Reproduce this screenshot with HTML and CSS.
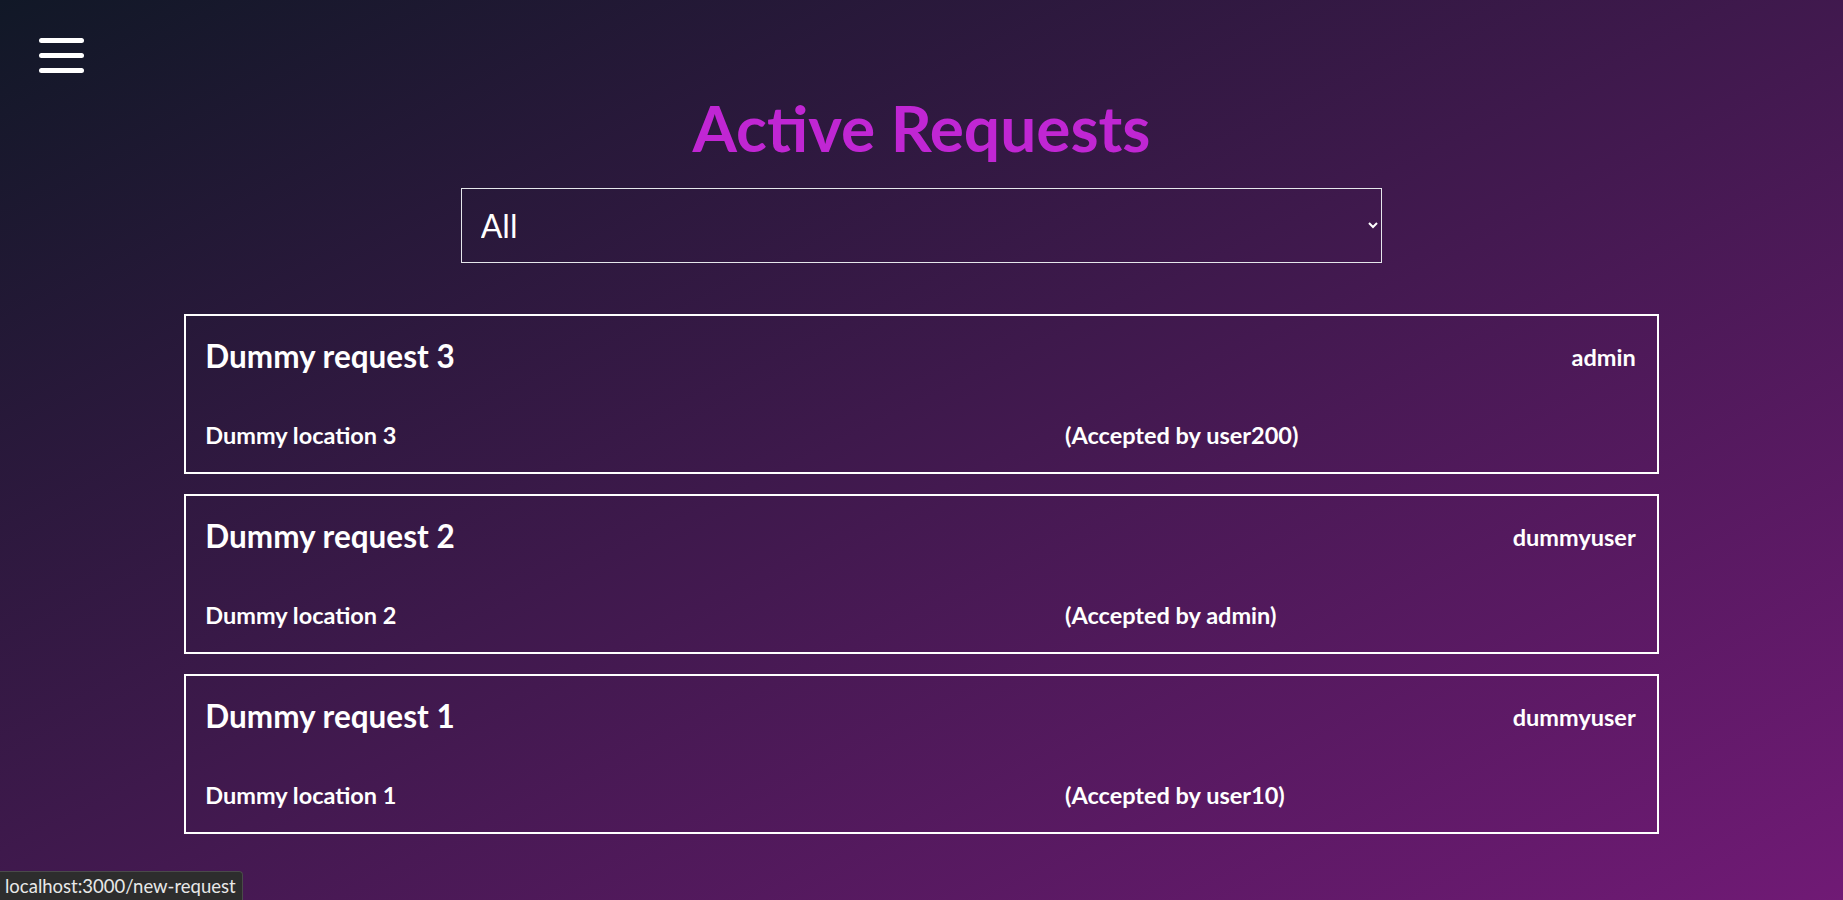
FILE: index.html
```html
<!DOCTYPE html>
<html>
<head>
    <link rel="stylesheet" href="styles.css">
</head>
<body>
  <header class="topbar">
    <button type="button" class="menu-btn" aria-label="Menu">
      <span></span>
      <span></span>
      <span></span>
    </button>
  </header>

  <main class="page">
    <h1 class="page-title">Active Requests</h1>

    <select class="filter" id="filter">
      <option>All</option>
      <option>Mine</option>
      <option>Accepted</option>
    </select>

    <div class="request-list">
      <div class="request-card">
        <div class="card-top">
          <h2 class="card-title">Dummy request 3</h2>
          <span class="card-user">admin</span>
        </div>
        <div class="card-bottom">
          <span>Dummy location 3</span>
          <span>(Accepted by user200)</span>
        </div>
      </div>

      <div class="request-card">
        <div class="card-top">
          <h2 class="card-title">Dummy request 2</h2>
          <span class="card-user">dummyuser</span>
        </div>
        <div class="card-bottom">
          <span>Dummy location 2</span>
          <span>(Accepted by admin)</span>
        </div>
      </div>

      <div class="request-card">
        <div class="card-top">
          <h2 class="card-title">Dummy request 1</h2>
          <span class="card-user">dummyuser</span>
        </div>
        <div class="card-bottom">
          <span>Dummy location 1</span>
          <span>(Accepted by user10)</span>
        </div>
      </div>
    </div>
  </main>

  <div class="status-link">localhost:3000/new-request</div>
</body>
</html>
```

FILE: styles.css
```css
html, body {
    margin: 0;
    min-height: 100vh;
}

body {
    font-family: Lato, "Open Sans", sans-serif;
    color: #fff;
    background: linear-gradient(to bottom right, #111827, #701a75);
}

.topbar {
    padding: 38px 0 0 39px;
}

.menu-btn {
    display: flex;
    flex-direction: column;
    gap: 10px;
    background: none;
    border: none;
    padding: 0;
    cursor: pointer;
}

.menu-btn span {
    display: block;
    width: 45px;
    height: 5px;
    border-radius: 3px;
    background-color: #fff;
}

.page {
    display: flex;
    flex-direction: column;
    align-items: center;
}

.page-title {
    margin: 17px 0 21px;
    font-size: 64px;
    line-height: 1.2;
    font-weight: 700;
    color: #c026d3;
}

.filter {
    width: 50%;
    height: 75px;
    padding: 0 12px 0 15px;
    font-family: Lato, sans-serif;
    font-size: 32px;
    font-weight: 400;
    color: #fff;
    background-color: transparent;
    border: 1px solid #e5e7eb;
    border-radius: 0;
}

.filter option {
    color: #000;
}

.request-list {
    width: 80%;
    margin-top: 51px;
    display: flex;
    flex-direction: column;
    gap: 20px;
}

.request-card {
    border: 2px solid #fff;
    padding: 22px 21px 23px 19px;
}

.card-top {
    display: flex;
    justify-content: space-between;
    align-items: center;
}

.card-title {
    margin: 0;
    font-size: 31.5px;
    line-height: 1.2;
    font-weight: 700;
}

.card-user {
    font-size: 23.5px;
    font-weight: 700;
}

.card-bottom {
    display: grid;
    grid-template-columns: 60.1% 1fr;
    margin-top: 45px;
    font-size: 23.5px;
    line-height: 1.2;
    font-weight: 700;
}

.status-link {
    position: fixed;
    left: 0;
    bottom: 0;
    padding: 3px 6px 3px 5px;
    font-size: 18.5px;
    color: #e8e8e8;
    background-color: #2d2d2d;
    border: 1px solid #4a4a4a;
    border-left: none;
    border-bottom: none;
    border-top-right-radius: 4px;
}
```
